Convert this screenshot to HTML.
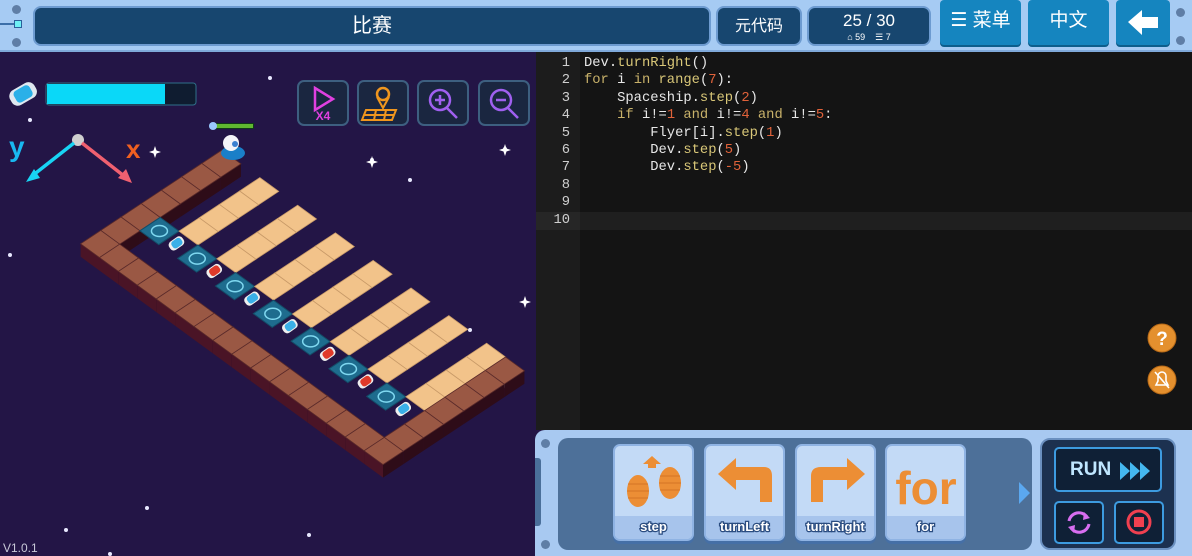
<!DOCTYPE html>
<html><head><meta charset="utf-8"><style>
*{box-sizing:border-box;margin:0;padding:0}
body{width:1192px;height:556px;overflow:hidden;background:#231546;font-family:"Liberation Sans","Noto Sans CJK SC",sans-serif;position:relative}
.abs{position:absolute}
#top{left:0;top:0;width:1192px;height:52px;background:#a6cbf3;border-bottom:2px solid #7fa9da}
.nav{background:#17466f;border-radius:8px;border:2px solid #6d9bd0;color:#fff;text-align:center}
.btn{background:#1585bf;border-radius:4px;color:#fff;text-align:center;font-size:19px;box-shadow:0 2px 0 #0d5e8c}
#editor{left:536px;top:52px;width:656px;height:378px;background:#141414}
#gut{left:536px;top:52px;width:44px;height:378px;background:#1c1c1c}
.ln{position:absolute;left:536px;width:34px;text-align:right;color:#cfcfcf;font:13.8px "Liberation Mono",monospace}
.cl{position:absolute;left:584px;color:#e8e8e8;font:13.8px "Liberation Mono",monospace;white-space:pre}
.k{color:#c9b26a}.f{color:#d9c778}.n{color:#e0623a}
#bp{left:535px;top:430px;width:657px;height:126px;background:#a8c9f1;border-radius:10px 0 0 0}
.card{position:absolute;top:444px;width:81px;height:97px;background:#c3daf6;border-radius:7px;border:2px solid #8fb3e3;box-shadow:0 3px 0 #456fa6;overflow:hidden}
.card .lb{position:absolute;left:0;bottom:0;width:100%;height:23px;background:#a7c4ec;color:#fff;font-weight:bold;font-size:13px;text-align:center;line-height:22px;-webkit-text-stroke:2.5px #2a4c80;paint-order:stroke fill}
.rb{position:absolute;background:#0f2036;border:2px solid #3d9be0;border-radius:5px}
.screw{position:absolute;width:9px;height:9px;border-radius:50%;background:#5f7ea6}
</style></head><body>
<div id="top" class="abs"></div>
<div class="screw" style="left:12px;top:5px"></div><div class="screw" style="left:12px;top:38px"></div>
<div class="abs" style="left:0;top:23px;width:16px;height:2px;background:#3c6fa8"></div>
<div class="abs" style="left:14px;top:20px;width:8px;height:8px;background:#6ef0f5;border:1px solid #2a5f9a"></div>
<div class="abs nav" style="left:33px;top:6px;width:678px;height:40px;font-size:20px;line-height:36px">比赛</div>
<div class="abs nav" style="left:716px;top:6px;width:86px;height:40px;font-size:16px;line-height:38px">元代码</div>
<div class="abs nav" style="left:807px;top:6px;width:124px;height:40px"><div style="font-size:17px;line-height:22px;margin-top:2px">25 / 30</div><div style="font-size:9px">⌂ 59 &nbsp;&nbsp; ☰ 7</div></div>
<div class="abs btn" style="left:940px;top:0;width:81px;height:45px;line-height:42px">☰ 菜单</div>
<div class="abs btn" style="left:1028px;top:0;width:81px;height:45px;line-height:42px">中文</div>
<div class="abs btn" style="left:1116px;top:0;width:54px;height:45px"><svg width="54" height="45"><path d="M12 22 L26 10 L26 17 L42 17 L42 28 L26 28 L26 35 Z" fill="#fff"/></svg></div>
<div class="screw" style="left:1176px;top:8px"></div><div class="screw" style="left:1176px;top:36px"></div>

<svg class="abs" id="game" style="left:0;top:52px" width="536" height="504"></svg>
<div class="abs" style="left:3px;top:541px;color:#c8c8d8;font-size:12px">V1.0.1</div>

<div id="editor" class="abs"></div><div id="gut" class="abs"></div>
<div class="abs" style="left:580px;top:212px;width:612px;height:18px;background:#1f1f1f"></div>
<div class="abs" style="left:536px;top:212px;width:44px;height:18px;background:#262626"></div>
<div id="code"></div>

<svg class="abs" style="left:1146px;top:323px" width="32" height="74">
<circle cx="16" cy="15" r="14" fill="#e4902e" stroke="#b86a17"/><text x="16" y="22" text-anchor="middle" fill="#fff" font-size="19" font-weight="bold" font-family="Liberation Sans">?</text>
<circle cx="16" cy="57" r="14" fill="#e4902e" stroke="#b86a17"/><path d="M10 62 L22 62 L20 58 L20 53 A4 4 0 0 0 12 53 L12 58 Z M9 49 L23 65" stroke="#fff" stroke-width="1.6" fill="none"/></svg>

<div id="bp" class="abs"></div>
<div class="screw" style="left:541px;top:439px"></div><div class="screw" style="left:541px;top:540px"></div>
<div class="abs" style="left:535px;top:458px;width:6px;height:68px;background:#4a6f9a;border-radius:0 3px 3px 0"></div>
<div class="abs" style="left:558px;top:438px;width:474px;height:112px;background:#4d7099;border-radius:10px"></div>
<div class="card" style="left:613px"><svg width="81" height="74"><path d="M37 10 L28 18 L33 18 L33 22 L41 22 L41 18 L46 18 Z" fill="#ec8e35"/><ellipse cx="23" cy="45" rx="11" ry="16" fill="#ec8e35"/><ellipse cx="55" cy="37" rx="11" ry="16" fill="#ec8e35"/><g stroke="#d57425" stroke-width="1"><path d="M13 38H33M12 45H34M13 52H33M45 30H65M44 37H66M45 44H65"/></g></svg><div class="lb">step</div></div>
<div class="card" style="left:704px"><svg width="81" height="74"><path d="M12 28 L30 12 L30 21 L58 21 Q66 21 66 30 L66 56 L54 56 L54 34 L30 34 L30 44 Z" fill="#ec8e35"/></svg><div class="lb">turnLeft</div></div>
<div class="card" style="left:795px"><svg width="81" height="74"><path d="M68 28 L50 12 L50 21 L24 21 Q14 21 14 30 L14 56 L26 56 L26 34 L50 34 L50 44 Z" fill="#ec8e35"/></svg><div class="lb">turnRight</div></div>
<div class="card" style="left:885px"><svg width="81" height="74"><text x="39" y="58" text-anchor="middle" fill="#ec8e35" font-size="46" font-weight="bold" font-family="Liberation Sans">for</text></svg><div class="lb">for</div></div>
<svg class="abs" style="left:1017px;top:480px" width="16" height="26"><path d="M2 2 L13 13 L2 24 Z" fill="#5ba8f0"/></svg>
<div class="abs" style="left:1040px;top:438px;width:136px;height:112px;background:#1c3150;border-radius:10px;border:2px solid #6b90c0"></div>
<div class="rb" style="left:1054px;top:447px;width:108px;height:45px"><span style="position:absolute;left:14px;top:10px;color:#bfe6ff;font-size:19px;font-weight:bold">RUN</span><svg style="position:absolute;left:62px;top:11px" width="36" height="22"><path d="M2 2L12 11L2 20ZM12 2L22 11L12 20ZM22 2L32 11L22 20Z" fill="#45b8f0"/></svg></div>
<div class="rb" style="left:1054px;top:501px;width:50px;height:43px"><svg width="46" height="39"><path d="M13 18 A10 10 0 0 1 31 14 M33 21 A10 10 0 0 1 15 25" stroke="#d86ef0" stroke-width="3" fill="none"/><path d="M28 9 L34 15 L27 17 Z M18 30 L12 24 L19 22Z" fill="#d86ef0"/></svg></div>
<div class="rb" style="left:1114px;top:501px;width:50px;height:43px"><svg width="46" height="39"><circle cx="23" cy="19" r="11" stroke="#f04050" stroke-width="3" fill="none"/><rect x="18" y="14" width="10" height="10" fill="#f04050"/></svg></div>

<script>
var code=[
'Dev.<span class="f">turnRight</span>()',
'<span class="k">for</span> i <span class="k">in</span> <span class="f">range</span>(<span class="n">7</span>):',
'    Spaceship.<span class="f">step</span>(<span class="n">2</span>)',
'    <span class="k">if</span> i!=<span class="n">1</span> <span class="k">and</span> i!=<span class="n">4</span> <span class="k">and</span> i!=<span class="n">5</span>:',
'        Flyer[i].<span class="f">step</span>(<span class="n">1</span>)',
'        Dev.<span class="f">step</span>(<span class="n">5</span>)',
'        Dev.<span class="f">step</span>(<span class="n">-5</span>)','','',''];
var h='';for(var i=0;i<10;i++){var y=56+i*17.4;h+='<div class="ln" style="top:'+y+'px">'+(i+1)+'</div><div class="cl" style="top:'+y+'px">'+code[i]+'</div>';}
document.getElementById('code').innerHTML=h;

var s='';var OX=222,OY=98,A=[18.9,13.8],B=[-20.2,13.4];
function P(i,j){return [OX+i*A[0]+j*B[0],OY+i*A[1]+j*B[1]];}
function pts(a){return a.map(function(p){return p[0].toFixed(1)+','+p[1].toFixed(1)}).join(' ');}
[[30,68],[270,26],[505,97],[372,108],[410,128],[10,203],[470,278],[508,337],[12,506],[110,502],[309,483],[66,478],[147,456]].forEach(function(p){s+='<circle cx="'+p[0]+'" cy="'+p[1]+'" r="2" fill="#e8e8ff"/>';});
[[155,100],[505,98],[525,250],[372,110],[505,332]].forEach(function(p){s+='<path d="M'+p[0]+' '+(p[1]-6)+'L'+(p[0]+1.5)+' '+(p[1]-1.5)+'L'+(p[0]+6)+' '+p[1]+'L'+(p[0]+1.5)+' '+(p[1]+1.5)+'L'+p[0]+' '+(p[1]+6)+'L'+(p[0]-1.5)+' '+(p[1]+1.5)+'L'+(p[0]-6)+' '+p[1]+'L'+(p[0]-1.5)+' '+(p[1]-1.5)+'Z" fill="#fff"/>';});
var tiles=[];
for(var j=0;j<7;j++)tiles.push([0,j,'w']);
for(var i=1;i<16;i++)tiles.push([i,6,'w']);
for(var j=0;j<6;j++)tiles.push([15,j,'w']);
var bc=['#3ab0e8','#e03a2a','#3ab0e8','#3ab0e8','#e03a2a','#e03a2a','#3ab0e8'];
for(var k=0;k<7;k++){var pi=1+2*k;tiles.push([pi,4,'p']);for(var j=0;j<4;j++)tiles.push([Math.min(pi+1,14),j,'s']);tiles.push([pi+1,4,'b',bc[k]]);}
tiles.sort(function(a,b){return (a[0]+a[1])-(b[0]+b[1])});
var H=13;
tiles.forEach(function(t){var i=t[0],j=t[1];var a=P(i,j),b=P(i+1,j),c=P(i+1,j+1),d=P(i,j+1);
if(t[2]=='w'){s+='<polygon points="'+pts([d,c,[c[0],c[1]+H],[d[0],d[1]+H]])+'" fill="#4a1426"/>';
s+='<polygon points="'+pts([c,b,[b[0],b[1]+H],[c[0],c[1]+H]])+'" fill="#2e0c18"/>';
s+='<polygon points="'+pts([a,b,c,d])+'" fill="#9a5844" stroke="#5a2a2a" stroke-width="0.8"/>';}
else if(t[2]=='s'){s+='<polygon points="'+pts([a,b,c,d])+'" fill="#f2c38a" stroke="#c89a68" stroke-width="0.8"/>';}
else if(t[2]=='p'){s+='<polygon points="'+pts([a,b,c,d])+'" fill="#1e6c8e" stroke="#134d68"/>';var m=P(i+.5,j+.5);s+='<ellipse cx="'+m[0]+'" cy="'+m[1]+'" rx="8" ry="5.5" fill="none" stroke="#7fd8f0" stroke-width="1.5"/>';}
else{var m=P(i+.4,j+.5);s+='<g transform="rotate(-35 '+m[0]+' '+m[1]+')"><rect x="'+(m[0]-8)+'" y="'+(m[1]-5)+'" width="16" height="10" rx="4" fill="#eee"/><rect x="'+(m[0]-5)+'" y="'+(m[1]-4)+'" width="11" height="8" rx="3" fill="'+t[3]+'"/></g>';}
});
s+='<ellipse cx="233" cy="101" rx="12" ry="7" fill="#1a7fc8"/><circle cx="231" cy="91" r="8" fill="#f4f4f8"/><circle cx="235" cy="92" r="3" fill="#3a80d0"/>';
s+='<rect x="214" y="71" width="40" height="6" fill="#0f3a18"/><rect x="216" y="72" width="37" height="4" fill="#5fb830"/><circle cx="213" cy="74" r="4" fill="#9ac8ff"/>';
s+='<rect x="46" y="31" width="150" height="22" rx="3" fill="#0f1c30" stroke="#2f6f8a"/><rect x="47" y="32" width="118" height="20" fill="#0ad8f8"/>';
s+='<g transform="rotate(-30 22 42)"><rect x="9" y="34" width="28" height="17" rx="7" fill="#dfe8f0"/><rect x="14" y="36" width="18" height="13" rx="4" fill="#2ab0e8"/></g>';
s+='<circle cx="78" cy="88" r="6" fill="#cfcfcf"/><path d="M74 91 L32 124" stroke="#18d4f4" stroke-width="3.5"/><path d="M26 130 L34 117 L40 126Z" fill="#18d4f4"/><path d="M82 91 L124 124" stroke="#f06070" stroke-width="3.5"/><path d="M132 131 L118 126 L126 117Z" fill="#f06070"/>';
s+='<text x="9" y="104" fill="#19b8f0" font-size="28" font-weight="bold" font-family="Liberation Sans">y</text><text x="126" y="106" fill="#f06020" font-size="26" font-weight="bold" font-family="Liberation Sans">x</text>';
var bx=[298,358,418,479];bx.forEach(function(x){s+='<rect x="'+x+'" y="29" width="50" height="44" rx="6" fill="#1a2640" stroke="#3d5f80" stroke-width="2"/>';});
s+='<path d="M315 36 L333 47 L315 58 Z" fill="none" stroke="#e040e0" stroke-width="2.5"/><text x="323" y="68" text-anchor="middle" fill="#e040e0" font-size="12" font-weight="bold" font-family="Liberation Sans">X4</text>';
s+='<path d="M366 58 L396 58 L392 68 L362 68Z M364 63 L394 63 M376 58 L374 68 M386 58 L384 68" stroke="#f0961e" stroke-width="2" fill="none"/><circle cx="383" cy="42" r="6" fill="none" stroke="#f0961e" stroke-width="2.5"/><path d="M377 45 L383 56 L389 45" fill="none" stroke="#f0961e" stroke-width="2"/>';
s+='<circle cx="440" cy="48" r="10" fill="none" stroke="#a060f0" stroke-width="2.5"/><path d="M447 56 L457 66 M435 48 H445 M440 43 V53" stroke="#a060f0" stroke-width="2.5"/>';
s+='<circle cx="501" cy="48" r="10" fill="none" stroke="#a060f0" stroke-width="2.5"/><path d="M508 56 L518 66 M496 48 H506" stroke="#a060f0" stroke-width="2.5"/>';
document.getElementById('game').innerHTML=s;
</script>
</body></html>
